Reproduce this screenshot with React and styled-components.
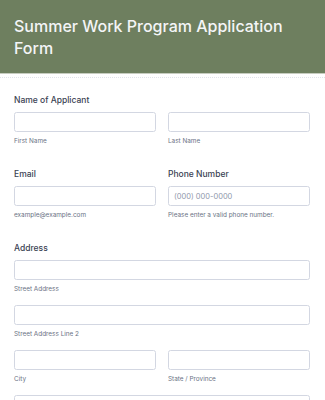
import React from "react";
import styled, { createGlobalStyle } from "styled-components";

const Global = createGlobalStyle`
  html, body { margin: 0; padding: 0; background: #ffffff; }
  body { font-family: Inter, "Noto Sans", sans-serif; }
  * { box-sizing: border-box; }
`;

const Page = styled.div`
  width: 325px;
  height: 400px;
  background: #ffffff;
  overflow: hidden;
`;

const Header = styled.header`
  height: 74px;
  background: #6e7f5f;
  border-bottom: 1px solid #c7cdc0;
  padding: 15px 14px 0 14px;
`;

const Title = styled.h1`
  margin: 0;
  font-family: Inter, sans-serif;
  font-size: 16px;
  line-height: 22px;
  font-weight: 500;
  color: #f4f5f7;
`;

const Body = styled.div`
  margin-top: 3px;
  border-top: 1px dotted #e2e4ea;
  padding: 16px 15px 0 14px;
  display: flex;
  flex-direction: column;
  gap: 22px;
`;

const Section = styled.section`
  display: flex;
  flex-direction: column;
`;

const Label = styled.div`
  font-size: 8.5px;
  line-height: 12px;
  font-weight: 500;
  color: #3a4253;
  margin-bottom: 6px;
`;

const Row = styled.div`
  display: grid;
  grid-template-columns: ${(p) => (p.$cols === 2 ? "1fr 1fr" : "1fr")};
  column-gap: 12px;
  & + & {
    margin-top: 11px;
  }
`;

const Field = styled.div`
  display: flex;
  flex-direction: column;
`;

const Input = styled.input`
  height: 20px;
  width: 100%;
  border: 1px solid #d3d7e2;
  border-radius: 2.5px;
  background: #ffffff;
  padding: 0 5px;
  font-family: Inter, sans-serif;
  font-size: 7.5px;
  color: #2c3345;
  outline: none;
  &::placeholder {
    color: #8f98ab;
  }
`;

const Sub = styled.div`
  margin-top: 5px;
  font-size: 6.4px;
  line-height: 9px;
  color: #6b7385;
`;

function TextField({ sub, placeholder }) {
  return (
    <Field>
      <Input placeholder={placeholder} readOnly />
      {sub && <Sub>{sub}</Sub>}
    </Field>
  );
}

export default function App() {
  return (
    <Page>
      <Global />
      <Header>
        <Title>Summer Work Program Application Form</Title>
      </Header>
      <Body>
        <Section>
          <Label>Name of Applicant</Label>
          <Row $cols={2}>
            <TextField sub="First Name" />
            <TextField sub="Last Name" />
          </Row>
        </Section>
        <Row $cols={2}>
          <Section>
            <Label>Email</Label>
            <TextField sub="example@example.com" />
          </Section>
          <Section>
            <Label>Phone Number</Label>
            <TextField
              placeholder="(000) 000-0000"
              sub="Please enter a valid phone number."
            />
          </Section>
        </Row>
        <Section>
          <Label>Address</Label>
          <Row>
            <TextField sub="Street Address" />
          </Row>
          <Row>
            <TextField sub="Street Address Line 2" />
          </Row>
          <Row $cols={2}>
            <TextField sub="City" />
            <TextField sub="State / Province" />
          </Row>
          <Row>
            <TextField />
          </Row>
        </Section>
      </Body>
    </Page>
  );
}
